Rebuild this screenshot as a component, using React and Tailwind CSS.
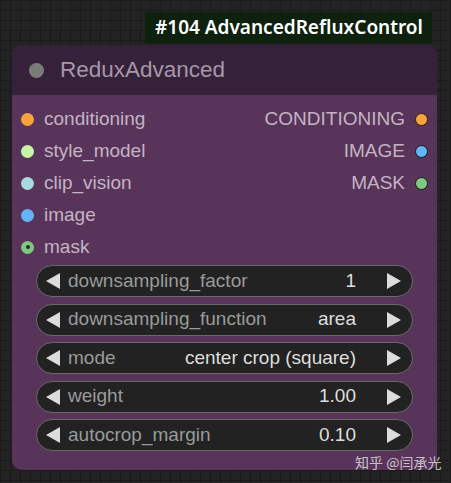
import React from "react";

const Tri = ({ dir }) => (
  <svg width="16" height="18" viewBox="0 0 16 18" className="shrink-0">
    {dir === "left" ? (
      <polygon points="15,1 15,17 1,9" fill="#dcdcdc" />
    ) : (
      <polygon points="1,1 1,17 15,9" fill="#dcdcdc" />
    )}
  </svg>
);

const Widget = ({ label, value }) => (
  <div className="h-[32px] rounded-full border border-[#6a6a6a] bg-[#222222] flex items-center pl-[8px] pr-[10px]">
    <Tri dir="left" />
    <span className="ml-[7px] text-[#9a9a9a] flex-1 whitespace-nowrap">{label}</span>
    <span className="text-[#dedede] mr-[30px] whitespace-nowrap">{value}</span>
    <Tri dir="right" />
  </div>
);

const Dot = ({ color, border, inner }) => (
  <span
    className="w-[13px] h-[13px] rounded-full shrink-0 flex items-center justify-center"
    style={{ background: color, border: border ? `1.5px solid ${border}` : "none" }}
  >
    {inner && <span className="w-[4px] h-[4px] rounded-full bg-[#2a2a2a]" />}
  </span>
);

export default function App() {
  const inputs = [
    ["conditioning", "#f7a53a"],
    ["style_model", "#c7f5a8"],
    ["clip_vision", "#a8d8e0"],
    ["image", "#64b5f6"],
    ["mask", "#81c784", true],
  ];
  const outputs = [
    ["CONDITIONING", "#f7a53a", "#3a1a10"],
    ["IMAGE", "#64b5f6", "#101820"],
    ["MASK", "#81c784", "#102010"],
  ];
  return (
    <div
      className="relative w-[451px] h-[483px] overflow-hidden bg-[#232323] bg-[image:linear-gradient(#1a1a1a_1px,transparent_1px),linear-gradient(90deg,#1a1a1a_1px,transparent_1px)] bg-[size:10px_10px] pt-[12px]"
      style={{ fontFamily: "'Liberation Sans', Arial, sans-serif" }}
    >
      <div
        className="ml-[145px] w-[287px] h-[31px] bg-[#0e200e] text-white text-[19px] font-semibold flex items-center pl-[10px] whitespace-nowrap"
        style={{ fontFamily: "'Noto Sans', 'Open Sans', sans-serif" }}
      >
        #104 AdvancedRefluxControl
      </div>
      <div className="ml-[12px] mt-[2px] w-[425px] h-[425px] rounded-[10px] overflow-hidden bg-[#58345a] flex flex-col">
        <div className="h-[50px] bg-[#35213a] flex items-center pl-[17px] shrink-0">
          <span className="w-[15px] h-[15px] rounded-full bg-[#7b7b7b]" />
          <span className="ml-[16px] text-[22.5px] text-[#a797a8]">ReduxAdvanced</span>
        </div>
        <div className="flex text-[19px] text-[#c3b3c4] pt-[8px]">
          <div className="flex flex-col flex-1">
            {inputs.map(([n, c, inner]) => (
              <div key={n} className="h-[32px] flex items-center pl-[9px]">
                <Dot color={c} inner={inner} />
                <span className="ml-[10px]">{n}</span>
              </div>
            ))}
          </div>
          <div className="flex flex-col items-end pr-[9px]">
            {outputs.map(([n, c, b]) => (
              <div key={n} className="h-[32px] flex items-center">
                <span className="mr-[10px]">{n}</span>
                <Dot color={c} border={b} />
              </div>
            ))}
          </div>
        </div>
        <div className="flex flex-col gap-[6.5px] px-[24px] mt-[2px] text-[19px]">
          <Widget label="downsampling_factor" value="1" />
          <Widget label="downsampling_function" value="area" />
          <Widget label="mode" value="center crop (square)" />
          <Widget label="weight" value="1.00" />
          <Widget label="autocrop_margin" value="0.10" />
        </div>
      </div>
      <div
        className="absolute left-[355px] top-[452px] text-[14px] text-[#e8e8e8]/80"
        style={{ fontFamily: "'Noto Sans CJK SC', sans-serif" }}
      >
        知乎 @闫承光
      </div>
    </div>
  );
}
